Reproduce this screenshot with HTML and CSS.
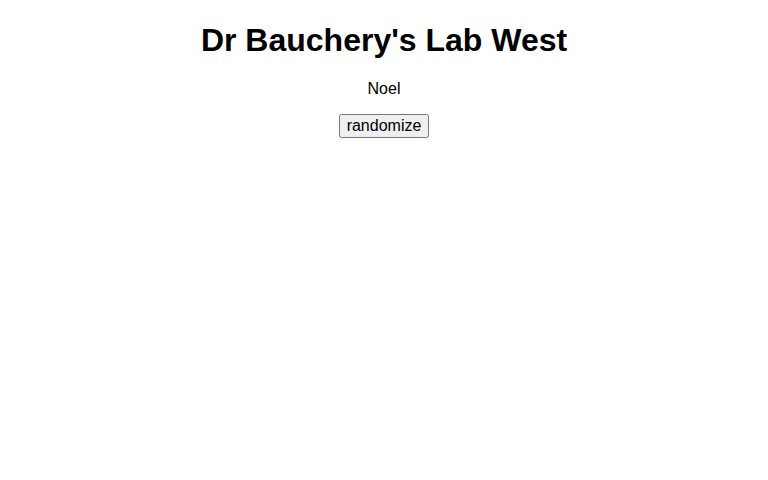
FILE: index.html
```html
<!DOCTYPE html>
<html lang="en">
<head>
    <meta charset="UTF-8" />
    <meta name="viewport" content="width=device-width, initial-scale=1.0" />
    <title>Dr Bauchery's Lab West</title>
    <link rel="stylesheet" href="styles.css">
</head>
<body>
    <h1>Dr Bauchery's Lab West</h1>
    <p id="name" class="name">Noel</p>
    <p class="controls">
        <button type="button" id="randomizeButton">randomize</button>
    </p>

    <script>
        const names = ['Noel', 'Ada', 'Felix', 'Mira', 'Otto', 'Iris'];
        const nameElement = document.getElementById('name');

        document.getElementById('randomizeButton').addEventListener('click', () => {
            nameElement.textContent = names[Math.floor(Math.random() * names.length)];
        });
    </script>
</body>
</html>
```

FILE: styles.css
```css
body {
    font-family: 'Liberation Sans', Arial, sans-serif;
    color: #000;
    background: #fff;
    text-align: center;
}
h1 {
    font-size: 2rem;
    margin: 13.5px 0 21.5px;
}
.name {
    font-size: 1rem;
}
button {
    font-family: 'Liberation Sans', Arial, sans-serif;
    font-size: 1rem;
}
```
